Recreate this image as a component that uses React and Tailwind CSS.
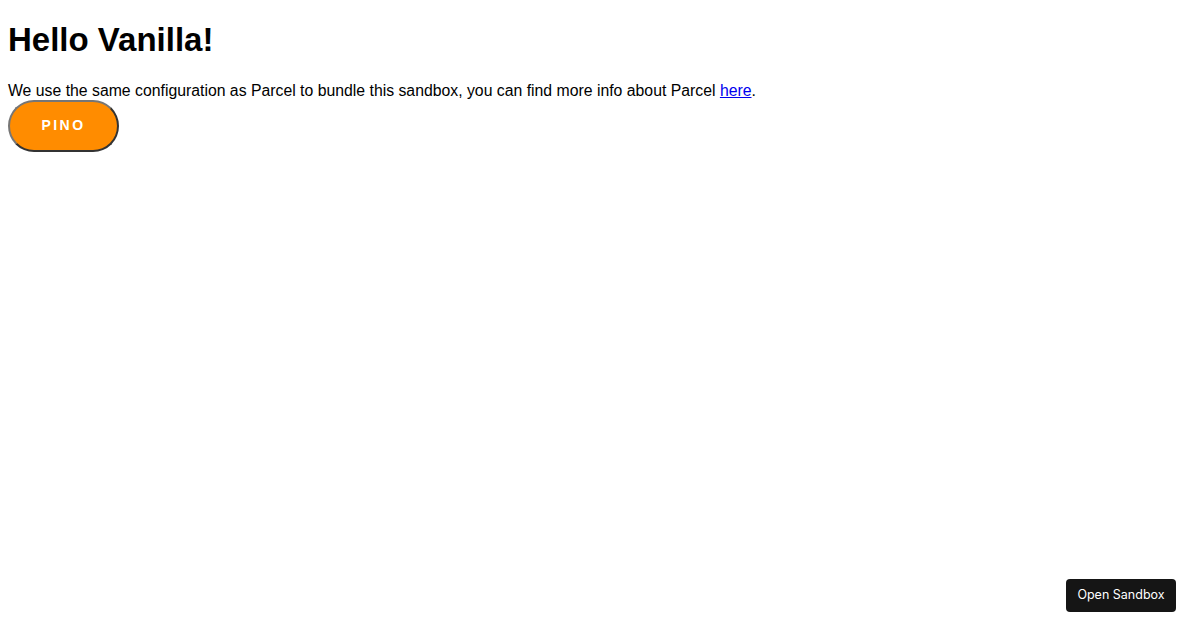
export default function App() {
  return (
    <div className="min-h-[630px] bg-white px-2 text-black font-['Liberation_Sans',Arial,sans-serif]">
      <div className="flow-root">
        <h1 className="mt-[21px] mb-[23.5px] text-[33px] font-bold leading-[37px]">
          Hello Vanilla!
        </h1>
        <p className="text-[15.8px] leading-[18px]">
          We use the same configuration as Parcel to bundle this sandbox, you can find more info about Parcel{" "}
          <a href="#" className="text-[#0000ee] underline">
            here
          </a>
          .
        </p>
        <button className="h-[52px] w-[111px] rounded-full border-2 border-t-[#767676] border-l-[#767676] border-b-[#333] border-r-[#333] bg-[#ff8c00] text-[14px] font-bold tracking-[2.5px] text-white">
          PINO
        </button>
      </div>
      <a
        href="#"
        className="fixed right-[24px] bottom-[18px] flex h-[33px] w-[110px] items-center justify-center rounded-[4px] bg-[#151515] text-[12.5px] text-white font-['Inter',sans-serif]"
      >
        Open Sandbox
      </a>
    </div>
  );
}
